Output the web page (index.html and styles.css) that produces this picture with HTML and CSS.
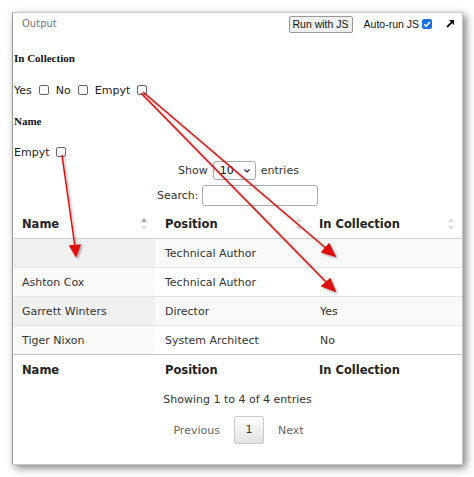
FILE: index.html
```html
<!DOCTYPE html>
<html>
<head>
<meta charset="utf-8">
<link rel="stylesheet" href="styles.css">
</head>
<body>
<div class="card">
  <div class="topbar">
    <span class="output-label">Output</span>
    <div class="top-actions">
      <button class="run-btn">Run with JS</button>
      <label class="autorun">Auto-run JS <span class="check-on"><svg width="10" height="10" viewBox="0 0 10 10"><path d="M2.2 5.2 L4.2 7.2 L7.9 2.9" fill="none" stroke="#fff" stroke-width="1.6"/></svg></span></label>
      <svg class="popout" width="9" height="9" viewBox="0 0 9 9"><path d="M1 8 L7 2" stroke="#111" stroke-width="1.8"/><path d="M3 1 H8 V6 Z" fill="#111"/></svg>
    </div>
  </div>
  <div class="filter-title t1">In Collection</div>
  <div class="filter-row r1">
    <span>Yes</span><input type="checkbox" class="cb">
    <span>No</span><input type="checkbox" class="cb">
    <span>Empyt</span><input type="checkbox" class="cb">
  </div>
  <div class="filter-title t2">Name</div>
  <div class="filter-row r2">
    <span>Empyt</span><input type="checkbox" class="cb">
  </div>
  <div class="length-row">
    <span>Show</span>
    <div class="select"><span>10</span><svg width="8" height="6" viewBox="0 0 8 6"><path d="M1.5 1.5 L4 4 L6.5 1.5" fill="none" stroke="#222" stroke-width="1.2"/></svg></div>
    <span>entries</span>
  </div>
  <div class="search-row">
    <span>Search:</span><input type="text" class="search-input">
  </div>
  <table class="data">
    <thead>
      <tr>
        <th class="c1"><span>Name</span><i class="sort asc"></i></th>
        <th class="c2"><span>Position</span><i class="sort"></i></th>
        <th class="c3"><span>In Collection</span><i class="sort"></i></th>
      </tr>
    </thead>
    <tbody>
      <tr class="odd"><td class="sorted"></td><td>Technical Author</td><td></td></tr>
      <tr class="even"><td class="sorted">Ashton Cox</td><td>Technical Author</td><td></td></tr>
      <tr class="odd"><td class="sorted">Garrett Winters</td><td>Director</td><td>Yes</td></tr>
      <tr class="even"><td class="sorted">Tiger Nixon</td><td>System Architect</td><td>No</td></tr>
    </tbody>
    <tfoot>
      <tr><th>Name</th><th>Position</th><th>In Collection</th></tr>
    </tfoot>
  </table>
  <div class="info">Showing 1 to 4 of 4 entries</div>
  <div class="paging">
    <span class="pg-link">Previous</span>
    <span class="pg-current">1</span>
    <span class="pg-link">Next</span>
  </div>
</div>
<svg class="annotations" width="474" height="477" viewBox="0 0 474 477">
  <defs>
    <filter id="sh" x="-20%" y="-20%" width="140%" height="140%">
      <feDropShadow dx="1.5" dy="1.5" stdDeviation="1" flood-color="#000" flood-opacity="0.35"/>
    </filter>
  </defs>
  <g filter="url(#sh)" stroke="#e01010" stroke-width="1.5" fill="#e01010">
    <line x1="143" y1="92" x2="328" y2="250"/>
    <polygon points="335,256 322,252 329,244"/>
    <line x1="141" y1="93" x2="328" y2="284"/>
    <polygon points="335,291 322,286 330,279"/>
    <line x1="62" y1="155" x2="75" y2="247"/>
    <polygon points="76,256 70,246 80,245"/>
  </g>
</svg>
</body>
</html>
```
FILE: styles.css
```css
* { box-sizing: border-box; }
html, body { margin: 0; padding: 0; background: #fff; }
body {
  width: 474px;
  height: 477px;
  overflow: hidden;
  font-family: "DejaVu Sans", Verdana, sans-serif;
  font-size: 11px;
  color: #333;
}
.card {
  margin: 12px 0 0 12px;
  width: 451px;
  height: 453px;
  border: 1px solid #c8c8c8;
  border-left-color: #9a9a9a;
  background: #fff;
  box-shadow: 3px 3px 8px rgba(0, 0, 0, 0.5);
}
.topbar {
  height: 21px;
  display: flex;
  align-items: center;
  justify-content: space-between;
  padding: 0 7px 0 9px;
}
.output-label { color: #777; font-size: 10px; }
.top-actions { display: flex; align-items: center; font-family: "Liberation Sans", Arial, sans-serif; font-size: 10.5px; color: #111; }
.run-btn {
  font-family: "Liberation Sans", Arial, sans-serif;
  font-size: 10.5px;
  color: #111;
  height: 17px;
  padding: 0 3px;
  border: 1px solid #999;
  border-radius: 2px;
  background: #efefef;
  margin-right: 11px;
  margin-top: 1px;
}
.autorun { display: flex; align-items: center; }
.check-on {
  display: inline-flex;
  width: 10px; height: 10px;
  margin-left: 3px;
  background: #1a6fe6;
  border-radius: 2px;
}
.popout { margin-left: 14px; }
.filter-title {
  font-family: "Liberation Serif", "Times New Roman", serif;
  font-weight: bold;
  font-size: 11px;
  color: #111;
  height: 20px;
  line-height: 20px;
  padding-left: 1px;
}
.t1 { margin-top: 14px; }
.t2 { margin-top: 11px; }
.filter-row {
  display: flex;
  align-items: center;
  height: 20px;
  padding-left: 1px;
  color: #222;
  margin-top: 12px;
}
.r2 { height: 18px; }
.cb {
  appearance: none;
  -webkit-appearance: none;
  width: 10px;
  height: 10px;
  margin: 0 7px 0 7px;
  border: 1px solid #666;
  border-radius: 2px;
  background: #fff;
}
.length-row {
  display: flex;
  align-items: center;
  justify-content: center;
  height: 19px;
  margin-left: 2px;
}
.select {
  display: flex;
  align-items: center;
  justify-content: space-between;
  width: 43px;
  height: 19px;
  margin: 0 5px 0 5px;
  padding: 0 4px 0 6px;
  border: 1px solid #aaa;
  border-radius: 3px;
  color: #111;
}
.search-row {
  display: flex;
  align-items: center;
  height: 21px;
  margin-top: 5px;
  padding-left: 144px;
}
.search-input {
  width: 116px;
  height: 21px;
  margin-left: 3px;
  border: 1px solid #aaa;
  border-radius: 3px;
}
.data {
  margin-top: 4px;
  width: 449px;
  border-collapse: collapse;
  table-layout: fixed;
  color: #333;
}
.data th, .data td { padding: 0 10px; text-align: left; }
.c1 { width: 142px; }
.c2 { width: 155px; }
.data thead th {
  position: relative;
  height: 28px;
  font-weight: bold;
  font-size: 11.5px;
  color: #222;
  border-bottom: 1px solid #cfcfcf;
  padding-left: 9px;
}
.data thead th.c2 { padding-left: 10px; }
.sort {
  position: absolute;
  right: 8px;
  top: 8px;
  width: 6px;
  height: 12px;
}
.sort::before, .sort::after {
  content: "";
  position: absolute;
  left: 0;
  border-left: 3px solid transparent;
  border-right: 3px solid transparent;
}
.sort::before { top: 0; border-bottom: 4px solid #ddd; }
.sort::after { bottom: 0; border-top: 4px solid #ddd; }
.sort.asc::before { border-bottom-color: #a8a8a8; }
.data tbody td {
  height: 29px;
  padding-top: 2px;
  border-top: 1px solid #e3e3e3;
}
.data tbody tr:first-child td { border-top: none; }
.data tbody td:first-child { padding-left: 9px; }
.odd td { background: #f9f9f9; }
.odd td.sorted { background: #f1f1f1; }
.even td { background: #fff; }
.even td.sorted { background: #fafafa; }
.data tfoot th {
  height: 31px;
  padding-top: 1px;
  font-weight: bold;
  font-size: 11.5px;
  color: #222;
  border-top: 1px solid #c4c4c4;
  padding-left: 9px;
}
.data tfoot th:nth-child(2) { padding-left: 10px; }
.info {
  text-align: center;
  height: 30px;
  line-height: 30px;
  color: #333;
}
.paging {
  display: flex;
  align-items: center;
  justify-content: center;
  margin-top: 1px;
  height: 28px;
  padding-left: 2px;
  color: #666;
}
.pg-link { padding: 0 7px; }
.pg-current {
  width: 30px;
  height: 28px;
  line-height: 26px;
  text-align: center;
  margin: 0 7px;
  color: #333;
  border: 1px solid #cacaca;
  border-radius: 2px;
  background: linear-gradient(#fff, #e2e2e2);
}
.annotations {
  position: absolute;
  left: 0;
  top: 0;
  pointer-events: none;
}
```
